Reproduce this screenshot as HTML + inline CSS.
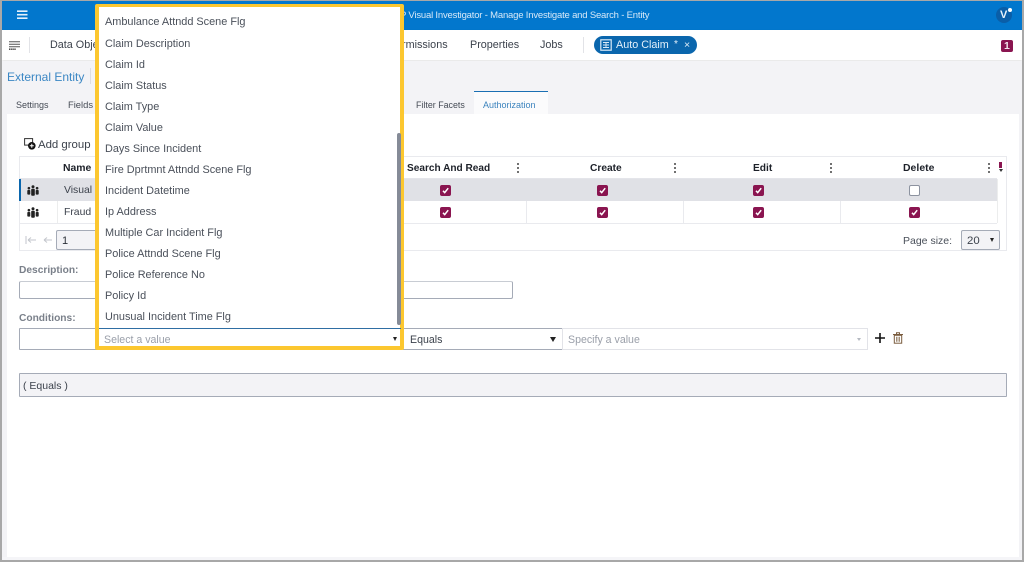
<!DOCTYPE html>
<html lang="en"><head><meta charset="utf-8"><title>Visual Investigator</title>
<style>
html,body{margin:0;padding:0;background:#fff}
#p{position:relative;width:1024px;height:562px;overflow:hidden;background:#fff;font-family:"Liberation Sans",sans-serif;color:#2b3038}
.a{position:absolute;box-sizing:border-box}
.t{position:absolute;white-space:nowrap;font-size:10.5px;line-height:14px}
.b{font-weight:bold;color:#1d2129}
.li{position:absolute;left:105px;white-space:nowrap;font-size:10.9px;line-height:14px;color:#4a505a}
.cb{position:absolute;width:11px;height:11px;border-radius:2px;background:#8a1550}
.cb svg{position:absolute;left:0;top:0}
.ek{position:absolute;width:2px;height:10px}
.ek i{display:block;width:2px;height:2px;background:#444;margin-bottom:2px;border-radius:1px}
</style></head><body><div id="p">
<!-- frame -->
<div class="a" style="left:0;top:0;width:1024px;height:562px;border:2px solid #a8a8a8;border-top-width:1px;z-index:9;pointer-events:none"></div>
<div class="a" style="left:2px;top:1px;width:1020px;height:29px;background:#0277cd"></div>
<div class="a" style="left:2px;top:30px;width:1020px;height:30px;background:#fff;box-shadow:0 1px 2px rgba(0,0,0,.12)"></div>
<div class="a" style="left:2px;top:61px;width:1020px;height:53px;background:#f3f3f6"></div>
<div class="a" style="left:2px;top:114px;width:5px;height:446px;background:#f3f3f6"></div>
<div class="a" style="left:1019px;top:114px;width:3px;height:446px;background:#f3f3f6"></div>
<div class="a" style="left:2px;top:557px;width:1020px;height:3px;background:#f5f5f8"></div>

<!-- header -->
<svg class="a" style="left:17px;top:10px" width="11" height="10"><path d="M0 1.2H10.5M0 4.7H10.5M0 8.2H10.5" stroke="#e6f1fb" stroke-width="1.7"/></svg>
<div class="t" style="left:400px;top:9px;color:#d8e9f8;font-size:9.5px;letter-spacing:-.19px">P Visual Investigator - Manage Investigate and Search - Entity</div>
<div class="a" style="left:996px;top:7px;width:16px;height:16px;border-radius:50%;background:#0a5ea8"></div>
<div class="t" style="left:1000px;top:8px;color:#e8f2fb;font-size:11px;font-weight:bold">V</div>
<div class="a" style="left:1008px;top:8px;width:4px;height:4px;border-radius:50%;background:#fff"></div>

<!-- toolbar -->
<svg class="a" style="left:9px;top:41px" width="12" height="10"><path d="M0 .7H11M0 3.2H11M0 5.7H11" stroke="#555" stroke-width="1"/><path d="M0 8.2H7" stroke="#333" stroke-width="1.4" stroke-dasharray="1.5 .6"/></svg>
<div class="a" style="left:29px;top:37px;width:1px;height:16px;background:#e2e3e7"></div>
<div class="t" style="left:50px;top:38px;font-size:10.8px;color:#3c424c">Data Objects</div>
<div class="t" style="left:402px;top:38px;font-size:10.8px;color:#3c424c">rmissions</div>
<div class="t" style="left:470px;top:38px;font-size:10.8px;color:#3c424c">Properties</div>
<div class="t" style="left:540px;top:38px;font-size:10.8px;color:#3c424c">Jobs</div>
<div class="a" style="left:583px;top:37px;width:1px;height:16px;background:#e2e3e7"></div>
<div class="a" style="left:594px;top:36px;width:103px;height:18px;border-radius:9px;background:#0a66ad"></div>
<svg class="a" style="left:600px;top:39px" width="12" height="12"><rect x=".8" y=".8" width="10.4" height="10.4" fill="none" stroke="#d9e9f7" stroke-width="1.2"/><path d="M3 3.5H9M3 6H9M3 8.5H9M6 3V9" stroke="#d9e9f7" stroke-width=".9"/></svg>
<div class="t" style="left:616px;top:38px;color:#e3f0fa;font-size:10.8px">Auto Claim</div>
<div class="t" style="left:674px;top:38px;color:#e3f0fa;font-size:10px">*</div>
<div class="t" style="left:684px;top:38px;color:#e3f0fa;font-size:10.5px">×</div>
<div class="a" style="left:1001px;top:40px;width:12px;height:12px;border-radius:2px;background:#8a1550"></div>
<div class="t" style="left:1004px;top:39px;color:#f1e4ec;font-size:10.5px;font-weight:bold">1</div>

<!-- sub header -->
<div class="t" style="left:7px;top:70px;font-size:12px;color:#3b87c4">External Entity</div>
<div class="a" style="left:90px;top:68px;width:1px;height:16px;background:#dcdde2"></div>

<!-- tabs -->
<div class="t" style="left:16px;top:98px;font-size:9px;color:#454b55">Settings</div>
<div class="t" style="left:68px;top:98px;font-size:9.4px;color:#454b55">Fields</div>
<div class="t" style="left:416px;top:98px;font-size:8.9px;color:#454b55">Filter Facets</div>
<div class="a" style="left:7px;top:114px;width:1012px;height:443px;background:#fff"></div>
<div class="a" style="left:474px;top:91px;width:74px;height:23px;background:#fbfbfc;border-top:1px solid #1a6fb3"></div>
<div class="t" style="left:483px;top:98px;font-size:9px;color:#3b83bd">Authorization</div>

<!-- add group -->
<svg class="a" style="left:24px;top:138px" width="12" height="12"><rect x=".6" y=".6" width="8" height="6.5" fill="none" stroke="#333" stroke-width="1"/><circle cx="7.8" cy="7.8" r="3.8" fill="#111"/><path d="M5.8 7.8H9.8M7.8 5.8V9.8" stroke="#fff" stroke-width="1"/></svg>
<div class="t" style="left:38px;top:138px;font-size:11.4px;color:#3c424c">Add group</div>

<!-- table -->
<div class="a" style="left:19px;top:156px;width:988px;height:95px;border:1px solid #e9eaee;background:#fff"></div>
<div class="a" style="left:20px;top:178px;width:977px;height:1px;background:#e4e5ea"></div>
<div class="a" style="left:20px;top:179px;width:977px;height:22px;background:#e0e1e6"></div>
<div class="a" style="left:19px;top:179px;width:1.5px;height:22px;background:#0a66ad"></div>
<div class="a" style="left:20px;top:223px;width:977px;height:1px;background:#e9eaee"></div>
<div class="a" style="left:57px;top:201px;width:1px;height:22px;background:#eceded"></div>
<div class="a" style="left:526px;top:201px;width:1px;height:22px;background:#e9eaee"></div>
<div class="a" style="left:683px;top:201px;width:1px;height:22px;background:#e9eaee"></div>
<div class="a" style="left:840px;top:201px;width:1px;height:22px;background:#e9eaee"></div>
<div class="a" style="left:997px;top:179px;width:1px;height:44px;background:#eceded"></div>

<div class="t b" style="left:63px;top:162px;font-size:10.4px">Name</div>
<div class="t b" style="left:407px;top:162px;font-size:10.1px">Search And Read</div>
<div class="t b" style="left:590px;top:162px;font-size:10.2px">Create</div>
<div class="t b" style="left:753px;top:162px;font-size:10.2px">Edit</div>
<div class="t b" style="left:903px;top:162px;font-size:10.4px;letter-spacing:.05px">Delete</div>
<div class="ek" style="left:517px;top:163px"><i></i><i></i><i></i></div>
<div class="ek" style="left:674px;top:163px"><i></i><i></i><i></i></div>
<div class="ek" style="left:830px;top:163px"><i></i><i></i><i></i></div>
<div class="ek" style="left:988px;top:163px"><i></i><i></i><i></i></div>
<div class="a" style="left:999px;top:162px;width:3px;height:6px;background:#8a1550"></div>
<div class="a" style="left:999px;top:169px;width:0;height:0;border-left:2px solid transparent;border-right:2px solid transparent;border-top:3px solid #333"></div>

<svg width="0" height="0" style="position:absolute"><defs><symbol id="g" viewBox="0 0 12 11"><circle cx="1.9" cy="3.2" r="1.3" fill="#222"/><circle cx="10.1" cy="3.2" r="1.3" fill="#222"/><circle cx="6" cy="1.7" r="1.5" fill="#222"/><rect x=".3" y="5" width="3" height="4.6" rx=".8" fill="#222"/><rect x="8.7" y="5" width="3" height="4.6" rx=".8" fill="#222"/><rect x="4.2" y="3.8" width="3.6" height="7" rx=".9" fill="#222"/></symbol>
<symbol id="c" viewBox="0 0 11 11"><path d="M3 5.8L4.7 7.6L8.2 3.2" fill="none" stroke="#fff" stroke-width="1.5"/></symbol></defs></svg>
<svg class="a" style="left:27px;top:185px" width="12" height="11"><use href="#g"/></svg>
<svg class="a" style="left:27px;top:207px" width="12" height="11"><use href="#g"/></svg>
<div class="t" style="left:64px;top:184px;font-size:10.4px;color:#3c424c">Visual</div>
<div class="t" style="left:64px;top:206px;font-size:10.4px;color:#3c424c">Fraud</div>

<div class="cb" style="left:440px;top:185px"><svg width="11" height="11"><use href="#c"/></svg></div>
<div class="cb" style="left:597px;top:185px"><svg width="11" height="11"><use href="#c"/></svg></div>
<div class="cb" style="left:753px;top:185px"><svg width="11" height="11"><use href="#c"/></svg></div>
<div class="a" style="left:909px;top:185px;width:11px;height:11px;border-radius:2px;background:#fff;border:1px solid #8d93a0"></div>
<div class="cb" style="left:440px;top:207px"><svg width="11" height="11"><use href="#c"/></svg></div>
<div class="cb" style="left:597px;top:207px"><svg width="11" height="11"><use href="#c"/></svg></div>
<div class="cb" style="left:753px;top:207px"><svg width="11" height="11"><use href="#c"/></svg></div>
<div class="cb" style="left:909px;top:207px"><svg width="11" height="11"><use href="#c"/></svg></div>

<!-- pager -->
<svg class="a" style="left:25px;top:235px" width="28" height="10"><path d="M1 1V9M3 5H11M3 5L6 2.5M3 5L6 7.5M19 5H27M19 5L22 2.5M19 5L22 7.5" fill="none" stroke="#c3c6cc" stroke-width="1"/></svg>
<div class="a" style="left:56px;top:230px;width:50px;height:20px;border:1px solid #a5abb7;border-radius:2px;background:#f3f3f6"></div>
<div class="t" style="left:62px;top:234px;font-size:11px">1</div>
<div class="t" style="left:903px;top:234px;font-size:10.5px;color:#4a505a">Page size:</div>
<div class="a" style="left:961px;top:230px;width:39px;height:20px;border:1px solid #a5abb7;border-radius:2px;background:#f3f3f6"></div>
<div class="t" style="left:967px;top:234px;font-size:11.4px;color:#3c424c">20</div>
<div class="a" style="left:990px;top:238px;border-left:2.5px solid transparent;border-right:2.5px solid transparent;border-top:4px solid #222"></div>

<!-- form -->
<div class="t" style="left:19px;top:264px;font-size:10.2px;font-weight:bold;color:#7a808a">Description:</div>
<div class="a" style="left:19px;top:281px;width:494px;height:18px;border:1px solid #a5abb7;border-top-color:#c8ccd3;border-radius:2px;background:#fff"></div>
<div class="t" style="left:19px;top:312px;font-size:10.2px;font-weight:bold;color:#7a808a">Conditions:</div>
<div class="a" style="left:19px;top:328px;width:80px;height:22px;border:1px solid #a5abb7;border-radius:1px;background:#fff"></div>
<div class="a" style="left:403px;top:328px;width:160px;height:22px;border:1px solid #a5abb7;border-left:0;background:#fff"></div>
<div class="t" style="left:410px;top:333px;font-size:10.6px;color:#3c424c">Equals</div>
<div class="a" style="left:550px;top:337px;border-left:3px solid transparent;border-right:3px solid transparent;border-top:5px solid #222"></div>
<div class="a" style="left:562px;top:328px;width:306px;height:22px;border:1px solid #e2e3e8;background:#fff"></div>
<div class="t" style="left:568px;top:333px;font-size:10.6px;color:#9a9fa9">Specify a value</div>
<div class="a" style="left:857px;top:338px;border-left:2px solid transparent;border-right:2px solid transparent;border-top:3px solid #b5b9c1"></div>
<svg class="a" style="left:875px;top:333px" width="10" height="10"><path d="M5 0V10M0 5H10" stroke="#111" stroke-width="1.6"/></svg>
<svg class="a" style="left:893px;top:332px" width="10" height="12"><path d="M0 2.5H10M3.5 2.5V.8H6.5V2.5" fill="none" stroke="#7a5c3e" stroke-width="1"/><rect x="1.3" y="3.3" width="7.4" height="7.9" fill="none" stroke="#7a5c3e" stroke-width="1"/><path d="M3.5 4.8V9.8M5 4.8V9.8M6.5 4.8V9.8" stroke="#7a5c3e" stroke-width=".7"/></svg>
<div class="a" style="left:19px;top:373px;width:988px;height:24px;border:1px solid #a5abb7;border-radius:1px;background:#f3f3f6"></div>
<div class="t" style="left:23px;top:379px;font-size:10.5px;color:#3c424c">( Equals )</div>

<!-- dropdown -->
<div class="a" style="left:95px;top:4px;width:309px;height:346px;background:#fff;border:4px solid #fcc72f;border-top-width:3px;border-radius:2px;z-index:5">
</div>
<div style="position:absolute;left:0;top:0;z-index:6">
<div class="a" style="left:397px;top:133px;width:4px;height:192px;background:#858b97;border-radius:2px"></div>
<div class="li" style="top:15px">Ambulance Attndd Scene Flg</div>
<div class="li" style="top:37px">Claim Description</div>
<div class="li" style="top:58px">Claim Id</div>
<div class="li" style="top:79px">Claim Status</div>
<div class="li" style="top:100px">Claim Type</div>
<div class="li" style="top:121px">Claim Value</div>
<div class="li" style="top:142px">Days Since Incident</div>
<div class="li" style="top:163px">Fire Dprtmnt Attndd Scene Flg</div>
<div class="li" style="top:184px">Incident Datetime</div>
<div class="li" style="top:205px">Ip Address</div>
<div class="li" style="top:226px">Multiple Car Incident Flg</div>
<div class="li" style="top:247px">Police Attndd Scene Flg</div>
<div class="li" style="top:268px">Police Reference No</div>
<div class="li" style="top:289px">Policy Id</div>
<div class="li" style="top:310px">Unusual Incident Time Flg</div>
<div class="a" style="left:99px;top:328px;width:302px;height:1px;background:#2f6ea3"></div>
<div class="t" style="left:104px;top:333px;font-size:10.6px;color:#9a9fa9">Select a value</div>
<div class="a" style="left:393px;top:337px;border-left:2.5px solid transparent;border-right:2.5px solid transparent;border-top:4px solid #222"></div>
</div>
</div></body></html>
